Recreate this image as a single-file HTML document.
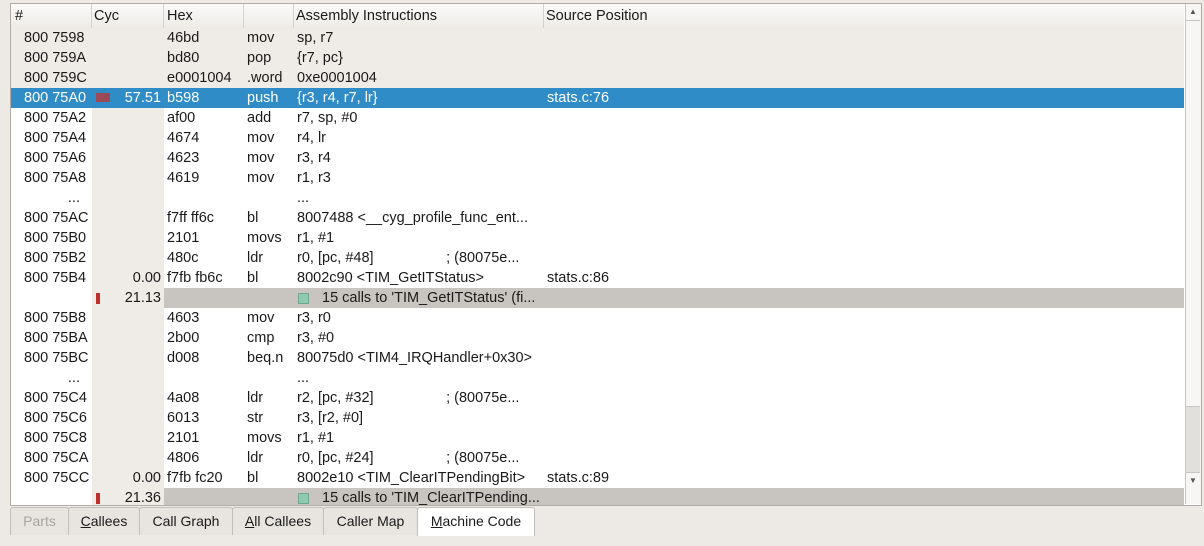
<!DOCTYPE html>
<html><head><style>
body{margin:0;width:1204px;height:546px;background:#edeae6;font-family:"Liberation Sans","DejaVu Sans",sans-serif;font-size:14.5px;color:#1a1a1a;position:relative;overflow:hidden}
.frame{position:absolute;left:10px;top:3px;width:1190px;height:501px;border:1px solid #b0aca7;background:#fff;overflow:hidden}
.hdr{position:absolute;left:0;top:0;width:1173px;height:24px;background:linear-gradient(#fbfaf9,#eeebe7);border-bottom:1px solid #b0aca7}
.hdr span{position:absolute;top:4px;}
.hdr i{position:absolute;top:0;width:1px;height:24px;background:#d6d3ce}
.row{position:absolute;left:0;width:1173px;height:20px;white-space:nowrap}
.row span{position:absolute;top:2px}
.cyc{position:absolute;left:81px;width:72px;height:20px;background:#efebe7}
.beige{background:#efebe7}
.sel{background:#308cc6;color:#fff}
.sel .cyc{background:#308cc6}
.gbg{position:absolute;left:153px;top:0;width:1020px;height:20px;background:#c8c5c0}
.sb{position:absolute;left:1174px;top:0;width:15px;height:500px;background:#f7f6f5;border-left:1px solid #c8c5c0}
.tab{position:absolute;top:507px;height:27px;border:1px solid #c2beb9;border-bottom:none;background:#e8e5e1;font-size:14px;line-height:27px;text-align:center;border-radius:3px 3px 0 0}
</style></head><body>
<div class="frame">
<div class="hdr">
<span style="left:4px">#</span><i style="left:80px"></i>
<span style="left:83px">Cyc</span><i style="left:152px"></i>
<span style="left:156px">Hex</span><i style="left:232px"></i>
<i style="left:282px"></i><span style="left:285px">Assembly Instructions</span>
<i style="left:532px"></i><span style="left:535px">Source Position</span>
</div>
<div id="rows"></div>
<div class="sb">
<div style="position:absolute;top:0;left:0;width:14px;height:16px;border-bottom:1px solid #c8c5c0;font-size:8px;text-align:center;line-height:16px;color:#555">▲</div>
<div style="position:absolute;top:402px;left:0;width:14px;height:66px;background:#e2e0dc;border-top:1px solid #c8c5c0"></div>
<div style="position:absolute;top:468px;left:0;width:14px;height:16px;border-top:1px solid #c8c5c0;font-size:8px;text-align:center;line-height:16px;color:#555">▼</div>
</div>
</div>
<div class="tab" style="left:10px;width:57px;color:#a8a5a1">Parts</div>
<div class="tab" style="left:68px;width:70px"><u>C</u>allees</div>
<div class="tab" style="left:139px;width:92px">Call Graph</div>
<div class="tab" style="left:232px;width:90px"><u>A</u>ll Callees</div>
<div class="tab" style="left:323px;width:93px">Caller Map</div>
<div class="tab" style="left:417px;width:116px;background:#fff;height:28px"><u>M</u>achine Code</div>
<script>
var S="&nbsp;&nbsp;&nbsp;&nbsp;&nbsp;&nbsp;&nbsp;&nbsp;&nbsp;&nbsp;&nbsp;&nbsp;&nbsp;&nbsp;&nbsp;&nbsp;&nbsp;&nbsp;";
var R=[
["800 7598","","46bd","mov","sp, r7","","beige"],
["800 759A","","bd80","pop","{r7, pc}","","beige"],
["800 759C","","e0001004",".word","0xe0001004","","beige"],
["800 75A0","57.51","b598","push","{r3, r4, r7, lr}","stats.c:76","sel"],
["800 75A2","","af00","add","r7, sp, #0",""],
["800 75A4","","4674","mov","r4, lr",""],
["800 75A6","","4623","mov","r3, r4",""],
["800 75A8","","4619","mov","r1, r3",""],
["...","","","","...",""],
["800 75AC","","f7ff ff6c","bl","8007488 <__cyg_profile_func_ent...",""],
["800 75B0","","2101","movs","r1, #1",""],
["800 75B2","","480c","ldr","r0, [pc, #48]"+S+"; (80075e...",""],
["800 75B4","0.00","f7fb fb6c","bl","8002c90 &lt;TIM_GetITStatus&gt;","stats.c:86"],
["","21.13","","","15 calls to 'TIM_GetITStatus' (fi...","","gray"],
["800 75B8","","4603","mov","r3, r0",""],
["800 75BA","","2b00","cmp","r3, #0",""],
["800 75BC","","d008","beq.n","80075d0 &lt;TIM4_IRQHandler+0x30&gt;",""],
["...","","","","...",""],
["800 75C4","","4a08","ldr","r2, [pc, #32]"+S+"; (80075e...",""],
["800 75C6","","6013","str","r3, [r2, #0]",""],
["800 75C8","","2101","movs","r1, #1",""],
["800 75CA","","4806","ldr","r0, [pc, #24]"+S+"; (80075e...",""],
["800 75CC","0.00","f7fb fc20","bl","8002e10 &lt;TIM_ClearITPendingBit&gt;","stats.c:89"],
["","21.36","","","15 calls to 'TIM_ClearITPending...","","gray"]
];
var h="";
R.forEach(function(r,i){
var t=24+i*20,c=r[6]||"";
h+='<div class="row '+c+'" style="top:'+t+'px">'+(c=="gray"?'<div class="gbg"></div>':'')+'<div class="cyc"></div>';
h+=r[0]=="..."?'<span style="right:1104px">...</span>':'<span style="left:13px">'+r[0]+'</span>';
if(r[1])h+='<span style="right:1023px">'+r[1]+'</span>';
if(c=="sel")h+='<div style="position:absolute;left:85px;top:5px;width:14px;height:9px;background:#9b4a55"></div>';
if(c=="gray")h+='<div style="position:absolute;left:85px;top:5px;width:4px;height:11px;background:#c0302a"></div><div style="position:absolute;left:287px;top:5px;width:9px;height:9px;background:#8fc9b0;border:1px solid #6fa890"></div>';
h+='<span style="left:156px">'+r[2]+'</span><span style="left:236px">'+r[3]+'</span>';
h+='<span style="left:'+(c=="gray"?311:286)+'px">'+r[4]+'</span><span style="left:536px">'+r[5]+'</span></div>';
});
document.getElementById("rows").innerHTML=h;
</script>
</body></html>
